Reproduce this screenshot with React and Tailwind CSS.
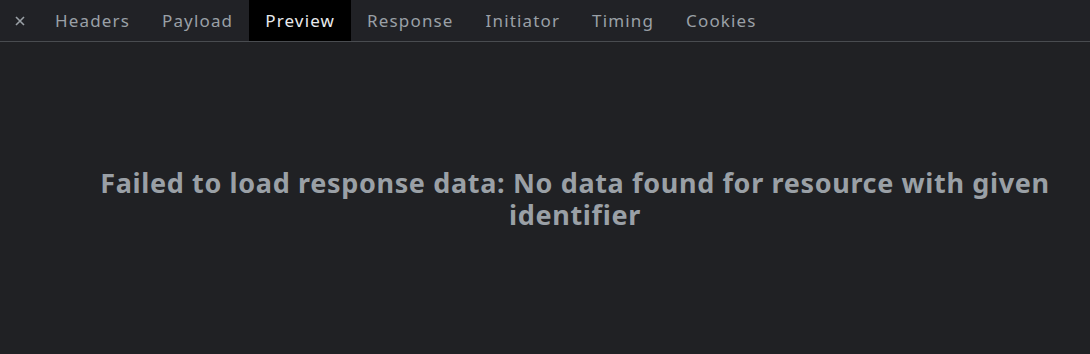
import React from "react";

const tabs = ["Headers", "Payload", "Preview", "Response", "Initiator", "Timing", "Cookies"];

export default function App() {
  return (
    <div
      className="w-[1090px] h-[354px] bg-[#202124] flex flex-col overflow-hidden"
      style={{ fontFamily: '"Noto Sans", "Open Sans", sans-serif' }}
    >
      <div className="h-[42px] flex items-stretch border-b border-[#494c50] bg-[#212226]">
        <div className="w-[39px] flex items-center justify-center text-[#9aa0a6]">
          <svg width="10" height="10" viewBox="0 0 10 10">
            <path d="M1 1L9 9M9 1L1 9" stroke="currentColor" strokeWidth="1.6" />
          </svg>
        </div>
        {tabs.map((t) => (
          <div
            key={t}
            className={
              "px-4 flex items-center text-[17px] tracking-[1.15px] " +
              (t === "Preview" ? "bg-black text-[#e8eaed]" : "text-[#9aa0a6]")
            }
          >
            {t}
          </div>
        ))}
      </div>
      <div className="flex-1 flex items-center justify-center pl-[60px] pr-0 pt-[2px]">
        <div className="text-center text-[27px] tracking-[0.65px] font-bold leading-[32px] text-[#9aa0a6]">
          Failed to load response data: No data found for resource with given identifier
        </div>
      </div>
    </div>
  );
}
